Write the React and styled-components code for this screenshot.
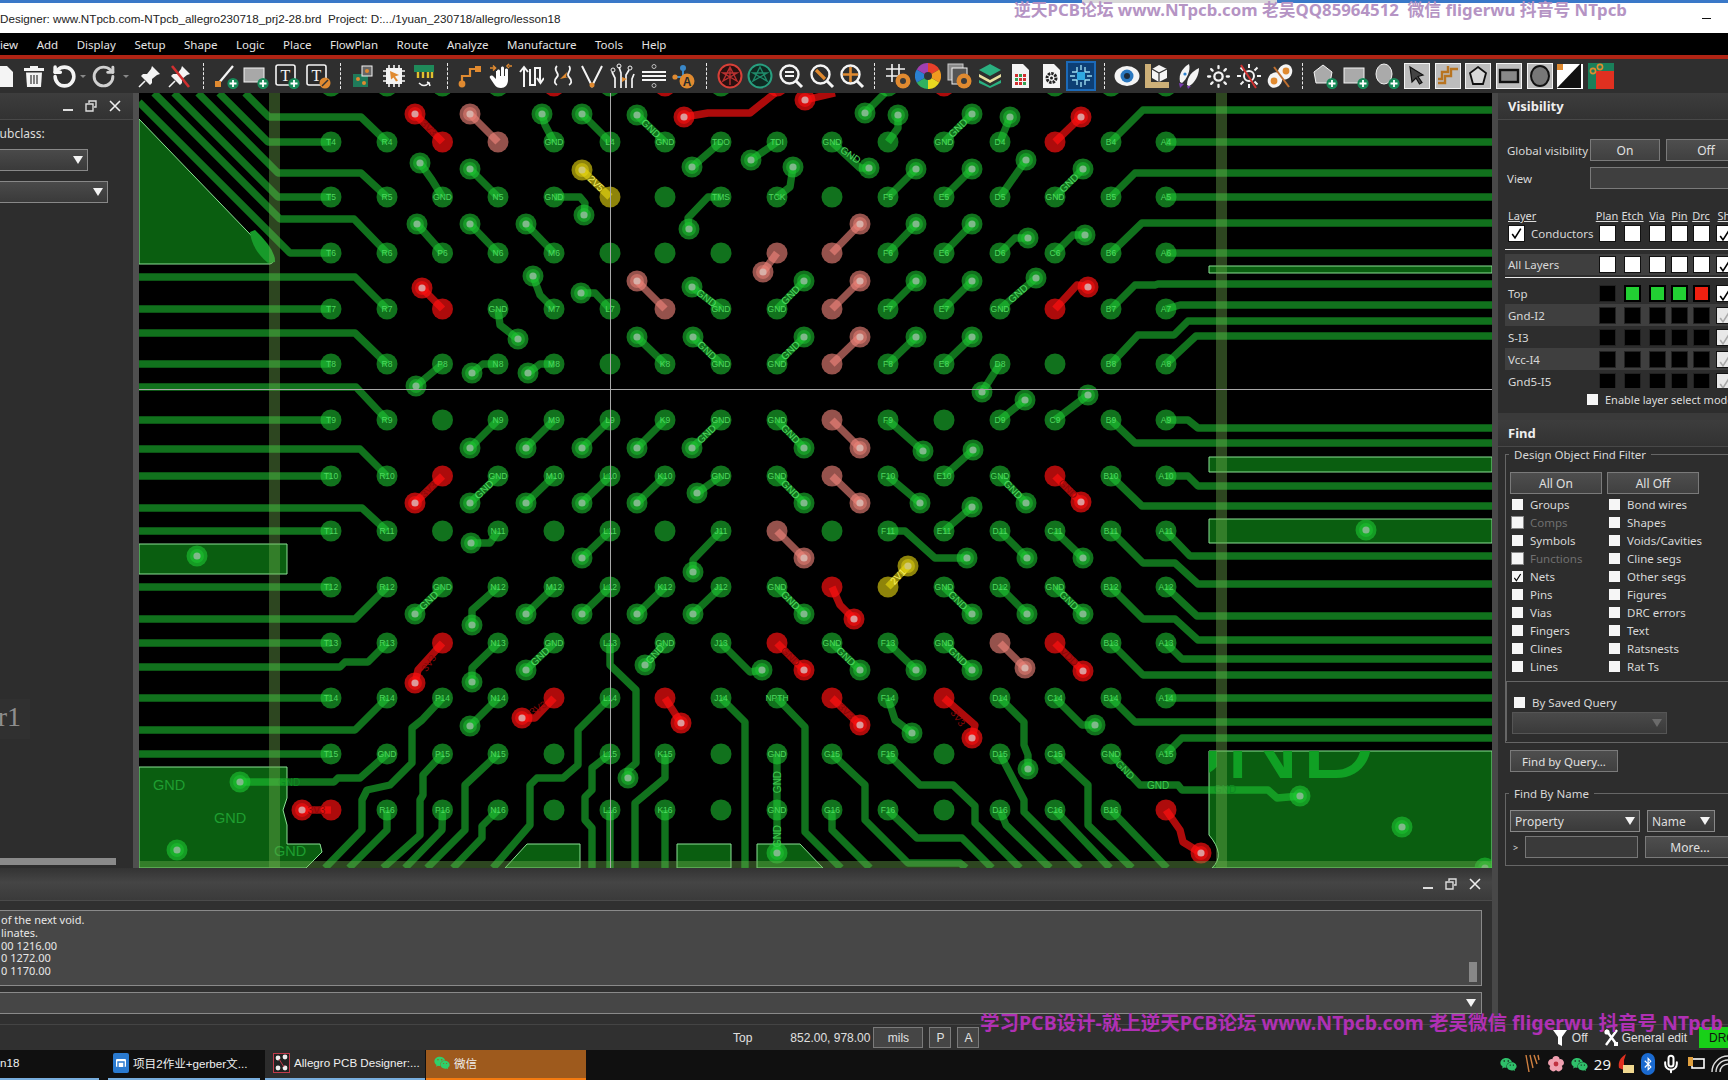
import React from "react";
import styled, { createGlobalStyle } from "styled-components";
import { RotateCcw, RotateCw, Sun, Mic } from "lucide-react";
import { FaWeixin, FaBluetoothB } from "react-icons/fa";

const UI = `"Noto Sans", "Noto Sans CJK SC", sans-serif`;
const NARROW = `"Liberation Sans", "Noto Sans CJK SC", sans-serif`;

const Global = createGlobalStyle`
  html, body { margin: 0; padding: 0; background: #000; }
  #root { width: 1728px; height: 1080px; }
  * { box-sizing: border-box; }
`;

/* ---------- board data ---------- */

const cols = "TRPNMLKJHGFEDCBA";
const colX = [331, 387, 442.5, 498, 554, 610, 665, 721, 777, 832, 888, 944, 1000, 1055, 1111, 1166];
const rowY = { 3: 86, 4: 142, 5: 197, 6: 253, 7: 309, 8: 364, 9: 420, 10: 476, 11: 531, 12: 587, 13: 643, 14: 698, 15: 754, 16: 810 };
const pos = (id) => [colX[cols.indexOf(id[0])], rowY[+id.slice(1)]];

const netColor = {
  g: { fill: "#1fd035", core: "#7fb98a", text: "#4fd860", op: 0.55 },
  r: { fill: "#ff1010", core: "#dc9a9a", text: "#8a0808", op: 0.68 },
  p: { fill: "#f0857a", core: "#d8b0a8", text: "#f0857a", op: 0.62 },
  y: { fill: "#ecdc10", core: "#d0c870", text: "#f4ec60", op: 0.6 },
};

const darkPads = "K5 G5 L6 K6 J6 L8 C8 P9 E9 P11 M11 K11 G11 M15 J15 E15 M16 J16 E16".split(" ");
const topPads = [["T3", "g"], ["R3", "g"], ["P3", "g"], ["N3", "g"], ["M3", "r"], ["L3", "g"], ["K3", "r"], ["J3", "g"], ["H3", "r"], ["F3", "g"], ["E3", "r"], ["C3", "g"], ["B3", "g"], ["A3", "g"]];

// id, colour, label (0 = the id), points after the pad, ends in a via, label on the trace
const nets = [
  ["T4", "g", 0, [[268, 142], [219, 93]]],
  ["R4", "g", 0, [[361, 117], [269, 117], [245, 93]]],
  ["P4", "r", "", [[415, 114]], 1, "3V3"],
  ["N4", "p", "", [[470, 114]], 1],
  ["M4", "g", "GND", [[545, 125], [542, 114]], 1],
  ["L4", "g", 0, [[582, 114]], 1],
  ["K4", "g", "GND", [[637, 115]], 1, "GND"],
  ["J4", "g", "TDO", [[692, 167]], 1],
  ["H4", "g", "TDI", [[751, 160]], 1],
  ["G4", "g", "GND", [[860, 168], [869, 168]], 1, "GND"],
  ["F4", "g", "", [[898, 128], [898, 115]], 1],
  ["E4", "g", "GND", [[972, 114]], 1, "GND"],
  ["D4", "g", 0, [[1010, 117]], 1],
  ["C4", "r", "", [[1081, 117]], 1],
  ["B4", "g", 0, [[1143, 110], [1492, 110]]],
  ["A4", "g", 0, [[1492, 142]]],

  ["T5", "g", 0, [[278, 197], [174, 93]]],
  ["R5", "g", 0, [[361, 173], [278, 173], [198, 93]]],
  ["P5", "g", "GND", [[432, 180], [420, 163]], 1],
  ["N5", "g", 0, [[470, 169]], 1],
  ["M5", "g", "GND", [[580, 197], [585, 203], [584, 215]], 1],
  ["L5", "y", "", [[582, 170]], 1, "2V5"],
  ["J5", "g", "TMS", [[708, 197], [688, 218], [689, 229]], 1],
  ["H5", "g", "TCK", [[790, 187], [793, 167]], 1],
  ["F5", "g", 0, [[916, 169]], 1],
  ["E5", "g", 0, [[972, 169]], 1],
  ["D5", "g", 0, [[1026, 160]], 1],
  ["C5", "g", "GND", [[1083, 169]], 1, "GND"],
  ["B5", "g", 0, [[1135, 173], [1492, 173]]],
  ["A5", "g", 0, [[1492, 197]]],

  ["T6", "g", 0, [[290, 253], [139, 102]]],
  ["R6", "g", 0, [[354, 219], [280, 219], [154, 93]]],
  ["P6", "g", 0, [[417, 224]], 1],
  ["N6", "g", 0, [[470, 224]], 1],
  ["M6", "g", 0, [[526, 224]], 1],
  ["H6", "p", "", [[763, 272]], 1],
  ["G6", "p", "", [[860, 224]], 1],
  ["F6", "g", 0, [[916, 224]], 1],
  ["E6", "g", 0, [[972, 224]], 1],
  ["D6", "g", 0, [[1015, 238], [1028, 238]], 1],
  ["C6", "g", 0, [[1073, 235], [1085, 235]], 1],
  ["B6", "g", 0, [[1142, 223], [1492, 223]]],
  ["A6", "g", 0, [[1492, 253]]],

  ["T7", "g", 0, [[139, 309]]],
  ["R7", "g", 0, [[355, 277], [139, 277]]],
  ["P7", "r", "", [[422, 288]], 1],
  ["N7", "g", "GND", [[500, 325], [518, 339]], 1],
  ["M7", "g", 0, [[540, 295], [533, 276]], 1],
  ["L7", "g", 0, [[595, 293], [581, 293]], 1],
  ["K7", "p", "", [[637, 281]], 1],
  ["J7", "g", "GND", [[692, 287]], 1, "GND"],
  ["H7", "g", "GND", [[804, 281]], 1, "GND"],
  ["G7", "p", "", [[860, 281]], 1],
  ["F7", "g", 0, [[916, 281]], 1],
  ["E7", "g", 0, [[972, 281]], 1],
  ["D7", "g", "GND", [[1036, 278]], 1, "GND"],
  ["C7", "r", "", [[1077, 285], [1088, 287]], 1],
  ["B7", "g", 0, [[1135, 285], [1155, 285], [1158, 284], [1492, 284]]],
  ["A7", "g", 0, [[1180, 305], [1492, 305]]],

  ["T8", "g", 0, [[139, 364]]],
  ["R8", "g", 0, [[355, 333], [139, 333]]],
  ["P8", "g", 0, [[416, 386]], 1],
  ["N8", "g", 0, [[483, 364], [472, 373]], 1],
  ["M8", "g", 0, [[540, 364], [528, 373]], 1],
  ["K8", "g", 0, [[637, 337]], 1],
  ["J8", "g", "GND", [[693, 337]], 1, "GND"],
  ["H8", "g", "GND", [[804, 337]], 1, "GND"],
  ["G8", "p", "", [[860, 337]], 1],
  ["F8", "g", 0, [[916, 337]], 1],
  ["E8", "g", 0, [[972, 337]], 1],
  ["D8", "g", 0, [[982, 392]], 1],
  ["B8", "g", 0, [[1138, 335], [1174, 335], [1188, 321], [1492, 321]]],
  ["A8", "g", 0, [[1196, 336], [1492, 336]]],

  ["T9", "g", 0, [[139, 420]]],
  ["R9", "g", 0, [[356, 387], [139, 387]]],
  ["N9", "g", 0, [[470, 448]], 1],
  ["M9", "g", 0, [[526, 448]], 1],
  ["L9", "g", 0, [[582, 448]], 1],
  ["K9", "g", 0, [[637, 448]], 1],
  ["J9", "g", "GND", [[692, 448]], 1, "GND"],
  ["H9", "g", "GND", [[804, 448]], 1, "GND"],
  ["G9", "p", "", [[860, 448]], 1],
  ["F9", "g", 0, [[923, 451]], 1],
  ["D9", "g", 0, [[1025, 400]], 1],
  ["C9", "g", 0, [[1088, 395]], 1],
  ["B9", "g", 0, [[1135, 443], [1492, 443]]],
  ["A9", "g", 0, [[1188, 420], [1198, 428], [1492, 428]]],

  ["T10", "g", 0, [[139, 476]]],
  ["R10", "g", 0, [[360, 449], [139, 449]]],
  ["P10", "r", "", [[415, 503]], 1, "3V3"],
  ["N10", "g", "GND", [[470, 503]], 1, "GND"],
  ["M10", "g", 0, [[526, 503]], 1],
  ["L10", "g", 0, [[582, 503]], 1],
  ["K10", "g", 0, [[637, 503]], 1],
  ["J10", "g", "GND", [[697, 493]], 1],
  ["H10", "g", "GND", [[804, 503]], 1, "GND"],
  ["G10", "p", "", [[860, 503]], 1],
  ["F10", "g", 0, [[920, 503]], 1],
  ["E10", "g", 0, [[973, 450]], 1],
  ["D10", "g", "GND", [[1026, 503]], 1, "GND"],
  ["C10", "r", "", [[1081, 502]], 1, "GND"],
  ["B10", "g", 0, [[1142, 506], [1492, 506]]],
  ["A10", "g", 0, [[1188, 476], [1198, 486], [1492, 486]]],

  ["T11", "g", 0, [[139, 531]]],
  ["R11", "g", 0, [[362, 508], [139, 508]]],
  ["N11", "g", 0, [[490, 543], [471, 543]], 1],
  ["L11", "g", 0, [[582, 558]], 1],
  ["J11", "g", 0, [[693, 560], [693, 572]], 1],
  ["H11", "p", "", [[804, 558]], 1],
  ["F11", "g", 0, [[905, 531], [935, 558], [967, 558]], 1],
  ["E11", "g", 0, [[972, 507]], 1],
  ["D11", "g", 0, [[1027, 558]], 1],
  ["C11", "g", 0, [[1083, 558]], 1],
  ["B11", "g", 0, [[1143, 563], [1175, 563], [1198, 584], [1492, 584]]],
  ["A11", "g", 0, [[1190, 556], [1492, 556]]],

  ["T12", "g", 0, [[139, 587]]],
  ["R12", "g", 0, [[355, 619], [139, 619]]],
  ["P12", "g", "GND", [[415, 614]], 1, "GND"],
  ["N12", "g", 0, [[472, 610], [472, 625]], 1],
  ["M12", "g", 0, [[526, 614]], 1],
  ["L12", "g", 0, [[582, 614]], 1],
  ["K12", "g", 0, [[637, 614]], 1],
  ["J12", "g", 0, [[693, 614]], 1],
  ["H12", "g", "GND", [[804, 614]], 1, "GND"],
  ["G12", "r", "", [[840, 605], [854, 619]], 1],
  ["F12", "y", "", [[908, 566]], 1, "2V1"],
  ["E12", "g", "GND", [[972, 614]], 1, "GND"],
  ["D12", "g", 0, [[1027, 614]], 1],
  ["C12", "g", "GND", [[1083, 614]], 1, "GND"],
  ["B12", "g", 0, [[1143, 619], [1175, 619], [1198, 640], [1492, 640]]],
  ["A12", "g", 0, [[1197, 616], [1492, 616]]],

  ["T13", "g", 0, [[139, 643]]],
  ["R13", "g", 0, [[368, 662], [345, 662], [340, 667], [139, 667]]],
  ["P13", "r", "", [[418, 670], [415, 683]], 1, "3V3"],
  ["N13", "g", 0, [[472, 668], [472, 682]], 1],
  ["M13", "g", "GND", [[526, 670]], 1, "GND"],
  ["L13", "g", 0, [[610, 665], [636, 690], [636, 763], [628, 770], [628, 778]], 1],
  ["K13", "g", "GND", [[645, 665]], 1, "GND"],
  ["J13", "g", 0, [[750, 672], [762, 670]], 1],
  ["H13", "r", "", [[804, 670]], 1, "GND"],
  ["G13", "g", "GND", [[860, 670]], 1, "GND"],
  ["F13", "g", 0, [[916, 670]], 1],
  ["E13", "g", "GND", [[972, 670]], 1, "GND"],
  ["D13", "p", "", [[1025, 668]], 1],
  ["C13", "r", "", [[1083, 671]], 1, "VDD"],
  ["B13", "g", 0, [[1143, 675], [1492, 675]]],
  ["A13", "g", 0, [[1182, 659], [1492, 659]]],

  ["T14", "g", 0, [[139, 698]]],
  ["R14", "g", 0, [[355, 730], [139, 730]]],
  ["P14", "g", 0, [[422, 720], [412, 728], [412, 763], [390, 785], [367, 790], [362, 800], [362, 830], [325, 868]]],
  ["N14", "g", 0, [[470, 726]], 1],
  ["M14", "r", "", [[535, 718], [522, 718]], 1, "3V3"],
  ["L14", "g", 0, [[578, 730], [578, 765], [563, 778], [537, 778], [530, 785], [530, 825], [493, 868]]],
  ["K14", "r", "", [[681, 723]], 1],
  ["J14", "g", 0, [[745, 722], [745, 868]]],
  ["H14", "g", "NPTH", [[805, 727], [805, 832], [841, 868]]],
  ["G14", "r", "", [[860, 725]], 1, "3V3"],
  ["F14", "g", 0, [[895, 720], [912, 733]], 1],
  ["E14", "r", "", [[975, 725], [972, 738]], 1, "3V3"],
  ["D14", "g", 0, [[1024, 722], [1024, 745], [1028, 755], [1028, 769]], 1],
  ["C14", "g", 0, [[1082, 725], [1095, 725]], 1],
  ["B14", "g", 0, [[1135, 722], [1492, 722]]],
  ["A14", "g", 0, [[1492, 698]]],

  ["T15", "g", 0, [[139, 754]]],
  ["R15", "g", "GND", [[360, 778], [338, 778], [334, 782], [240, 782]], 1],
  ["P15", "g", 0, [[423, 775], [423, 795], [420, 800], [420, 835], [383, 868]]],
  ["N15", "g", 0, [[465, 785], [465, 830], [427, 868]]],
  ["L15", "g", 0, [[592, 768], [592, 790], [585, 797], [585, 820], [592, 828], [592, 868]]],
  ["K15", "g", 0, [[665, 778], [635, 803], [635, 868]]],
  ["H15", "g", "GND", [[777, 853]], 1],
  ["G15", "g", 0, [[865, 785], [865, 820], [908, 863], [960, 863], [966, 868]]],
  ["F15", "g", 0, [[920, 785], [953, 785], [975, 806], [975, 823], [1020, 868]]],
  ["D15", "g", 0, [[1024, 800], [1024, 812], [1080, 868]]],
  ["C15", "g", 0, [[1088, 785], [1088, 825], [1132, 868]]],
  ["B15", "g", "GND", [[1140, 785], [1178, 785], [1182, 790], [1268, 790], [1277, 798], [1300, 796]], 1],
  ["A15", "g", 0, [[1182, 738], [1492, 738]]],

  ["T16", "r", "", [[302, 810]], 1, "3V3"],
  ["R16", "g", 0, [[387, 830], [349, 868]]],
  ["P16", "g", 0, [[442, 830], [405, 868]]],
  ["N16", "g", 0, [[482, 826], [482, 838], [453, 868]]],
  ["L16", "g", 0, [[610, 868]]],
  ["K16", "g", 0, [[665, 868]]],
  ["G16", "g", 0, [[832, 830], [870, 868]]],
  ["F16", "g", 0, [[917, 838], [962, 838], [992, 868]]],
  ["D16", "g", 0, [[1006, 825], [1050, 868]]],
  ["C16", "g", 0, [[1110, 868]]],
  ["B16", "g", 0, [[1167, 868]]],
  ["A16", "r", "", [[1180, 830], [1183, 842], [1201, 853]], 1],
  ["H16", "g", "GND", []],
];

// traces that start from a via with no pad of their own
const stubs = [
  ["g", [[865, 113], [885, 93]]],
  ["r", [[684, 117], [708, 113], [750, 113], [775, 93]]],
  ["r", [[805, 100], [835, 93]]],
];
const looseVias = [[197, 556], [177, 850], [1366, 530], [1402, 827], [1485, 868]];

const pours = [
  "M139 119 L272 257 Q276 262 270 264 L139 264Z",
  "M1209 266H1492V273H1209Z",
  "M1209 457H1492V472H1209Z",
  "M1209 519H1492V543H1209Z",
  "M139 544H287V574H139Z",
  "M139 767H287V798L283 810L287 825V844H320L322 852L306 868H139Z",
  "M1209 751H1492V868H1212Q1226 855 1209 835Z",
  "M505 868L527 844H580V868Z",
  "M677 868V844H731V868Z",
  "M757 868V844H800L823 868Z",
];

const pourMarks = [[169, 785], [230, 818], [290, 851]];

// net names printed along a trace, away from its middle
const freeLabels = [
  [1158, 785, 0],
  [1125, 770, 45],
  [777, 782, -90],
  [777, 836, -90],
];

function TraceLabel({ from, to, text, color }) {
  const mx = (from[0] + to[0]) / 2;
  const my = (from[1] + to[1]) / 2;
  let deg = (Math.atan2(to[1] - from[1], to[0] - from[0]) * 180) / Math.PI;
  if (deg > 90) deg -= 180;
  if (deg < -90) deg += 180;
  return (
    <text x={mx} y={my} fontSize="10" fill={color} textAnchor="middle" dominantBaseline="central" transform={`rotate(${deg} ${mx} ${my})`}>
      {text}
    </text>
  );
}

function Via({ at, net }) {
  const c = netColor[net];
  return (
    <g>
      <circle cx={at[0]} cy={at[1]} r="10.5" fill={c.fill} opacity={c.op} />
      <circle cx={at[0]} cy={at[1]} r="7" fill={c.fill} opacity={c.op * 0.8} />
      <circle cx={at[0]} cy={at[1]} r="3.6" fill={c.core} />
    </g>
  );
}

function Board() {
  return (
    <BoardSvg viewBox="139 93 1353 775">
      <defs>
        <clipPath id="rightPour">
          <path d="M1209 751H1492V868H1209Z" />
        </clipPath>
      </defs>
      {pours.map((d) => (
        <path key={d} d={d} fill="#0a5e10" stroke="#8ae294" strokeWidth="1" />
      ))}
      <path d="M255 230Q276 250 275 262L268 263Q252 250 250 232Z" fill="#179a2a" />
      <g clipPath="url(#rightPour)">
        <text x="1143" y="778" fontSize="105" fill="#10a024">GND</text>
      </g>
      {pourMarks.map(([x, y]) => (
        <text key={x} x={x} y={y} fontSize="14.5" fill="#1f9e30" textAnchor="middle" dominantBaseline="central">GND</text>
      ))}

      {darkPads.map((id) => {
        const [x, y] = pos(id);
        return <circle key={id} cx={x} cy={y} r="10.5" fill="#1fd035" opacity="0.55" />;
      })}
      {topPads.map(([id, n]) => {
        const [x, y] = pos(id);
        return <circle key={id} cx={x} cy={y} r="10.5" fill={netColor[n].fill} opacity={netColor[n].op} />;
      })}

      {nets.map(([id, n, , pts]) => {
        const [x, y] = pos(id);
        const c = netColor[n];
        return (
          <g key={id}>
            <circle cx={x} cy={y} r="10.5" fill={c.fill} opacity={c.op} />
            {pts.length > 0 && (
              <polyline
                points={[[x, y], ...pts].map((p) => p.join(",")).join(" ")}
                fill="none"
                stroke={c.fill}
                strokeWidth="7.4"
                strokeLinejoin="round"
                strokeLinecap="butt"
                opacity={c.op}
              />
            )}
          </g>
        );
      })}
      {stubs.map(([n, pts]) => (
        <polyline
          key={pts[0].join()}
          points={pts.map((p) => p.join(",")).join(" ")}
          fill="none"
          stroke={netColor[n].fill}
          strokeWidth="7.4"
          strokeLinejoin="round"
          opacity={netColor[n].op}
        />
      ))}

      {nets.filter((e) => e[4]).map(([id, n, , pts]) => (
        <Via key={id} at={pts[pts.length - 1]} net={n} />
      ))}
      {stubs.map(([n, pts]) => (
        <Via key={pts[0].join()} at={pts[0]} net={n} />
      ))}
      {looseVias.map((at) => (
        <Via key={at.join()} at={at} net="g" />
      ))}

      {nets.map(([id, n, label]) => {
        const text = label === 0 ? id : label;
        if (!text) return null;
        const [x, y] = pos(id);
        return (
          <text key={id} x={x} y={y} fontSize="8.5" fill={netColor[n].text} textAnchor="middle" dominantBaseline="central">
            {text}
          </text>
        );
      })}
      {nets.filter((e) => e[5]).map(([id, n, , pts, , tl]) => (
        <TraceLabel key={id} from={pos(id)} to={pts[pts.length - 1]} text={tl} color={netColor[n].text} />
      ))}
      {freeLabels.map(([x, y, deg]) => (
        <text key={`${x}-${y}`} x={x} y={y} fontSize="10" fill="#3fc850" textAnchor="middle" dominantBaseline="central" transform={`rotate(${deg} ${x} ${y})`}>
          GND
        </text>
      ))}
      <text x="289" y="782" fontSize="10" fill="#0f8a22" textAnchor="middle" dominantBaseline="central">GND</text>
      <text x="1225" y="789" fontSize="10" fill="#0f8a22" textAnchor="middle" dominantBaseline="central">GND</text>

      <rect x="269" y="93" width="11" height="775" fill="#70b050" opacity="0.4" />
      <rect x="1216" y="93" width="11" height="775" fill="#70b050" opacity="0.4" />
      <rect x="139" y="861" width="1353" height="7" fill="#70b050" opacity="0.4" />
      <line x1="139" y1="389.5" x2="1492" y2="389.5" stroke="#a8a8a8" strokeWidth="1" />
      <line x1="610.5" y1="93" x2="610.5" y2="868" stroke="#a8a8a8" strokeWidth="1" />
    </BoardSvg>
  );
}

/* ---------- toolbar icons ---------- */

const W = "#f4f4f4";
const O = "#e08a30";

const Plus = () => (
  <g>
    <circle cx="20" cy="20.5" r="5.6" fill="#178a58" />
    <path d="M20 17v7M16.5 20.5h7" stroke="#fff" strokeWidth="1.8" />
  </g>
);

const EyeBadge = () => (
  <g>
    <circle cx="18" cy="18" r="7.5" fill={O} />
    <circle cx="18" cy="18" r="3" fill="#3a3a3a" />
  </g>
);

const PinShape = () => (
  <>
    <path d="M15 3l8 8-3 1-5 4 0 4-2 2-9-9 2-2 4 0 4-5z" fill={W} />
    <path d="M8 18l-6 6" stroke={W} strokeWidth="1.6" />
  </>
);

const ZoomRing = ({ children }) => (
  <>
    <circle cx="11.5" cy="11.5" r="9" fill="none" stroke={W} strokeWidth="2.4" />
    <path d="M18 18l6 6" stroke={W} strokeWidth="3" />
    {children}
  </>
);

const wheel = ["#e8402a", "#f09a20", "#e8d820", "#30b060", "#2a80d0", "#a040b0"];

const Art = {
  doc: <path d="M2 3h15l6 6v15H2z" fill={W} />,
  trash: (
    <>
      <path d="M9 3h8v2h6v3H3V5h6z" fill={W} />
      <path d="M5 9.5h16L20 24H6z" fill={W} />
      <path d="M10 12v9M13 12v9M16 12v9" stroke="#444" strokeWidth="1.3" />
    </>
  ),
  pin: <PinShape />,
  pinOff: (
    <>
      <PinShape />
      <path d="M5 3l17 21" stroke="#d03030" strokeWidth="2.6" />
    </>
  ),
  addLine: (
    <>
      <path d="M5 21L20 3" stroke={W} strokeWidth="2.2" />
      <rect x="2" y="18" width="6" height="6" fill={O} />
      <Plus />
    </>
  ),
  addRect: (
    <>
      <rect x="1" y="5" width="20" height="14" fill="#a8a8a8" stroke={W} />
      <Plus />
    </>
  ),
  textAdd: (
    <>
      <rect x="2" y="2" width="19" height="20" rx="2" fill="#2a2a2a" stroke={W} strokeWidth="1.6" />
      <text x="11.5" y="17.5" fontSize="16" fontFamily="Liberation Serif, serif" fill={W} textAnchor="middle">T</text>
      <Plus />
    </>
  ),
  textEdit: (
    <>
      <rect x="2" y="2" width="19" height="20" rx="2" fill="#2a2a2a" stroke={W} strokeWidth="1.6" />
      <text x="11.5" y="17.5" fontSize="16" fontFamily="Liberation Serif, serif" fill={W} textAnchor="middle">T</text>
      <circle cx="20" cy="20" r="5.5" fill={O} />
      <path d="M17 23l6-6" stroke="#333" strokeWidth="1.5" />
    </>
  ),
  comp: (
    <>
      <rect x="3" y="11" width="15" height="13" fill="#1f7a5a" />
      <rect x="12" y="3" width="10" height="10" fill="#666" stroke={W} />
      <circle cx="8" cy="16" r="2" fill={O} />
      <circle cx="14" cy="20" r="2" fill={O} />
      <circle cx="17" cy="8" r="2" fill={O} />
    </>
  ),
  chip: (
    <>
      <path d="M8 2v22M13 2v22M18 2v22M2 8h22M2 13h22M2 18h22" stroke={W} strokeWidth="1.6" />
      <rect x="5" y="5" width="16" height="16" fill={W} />
      <path d="M9 8l9 4-4 1.5 3 4-2 1-2.5-4-2.5 2z" fill={O} />
    </>
  ),
  comb: (
    <>
      <rect x="3" y="2" width="20" height="7" fill="#1f8a5a" />
      <path d="M7 9v6M12 9v6M17 9v6M21 9v6" stroke="#e0c030" strokeWidth="2.4" />
      <path d="M8 20q5 5 10 0l-2-1M18 20l1 3" stroke={W} strokeWidth="1.6" fill="none" />
    </>
  ),
  route: (
    <>
      <path d="M5 21v-8l8 0 0-7h7" stroke={O} strokeWidth="2.2" fill="none" />
      <circle cx="5" cy="21" r="3.4" fill={O} />
      <rect x="18" y="3" width="6" height="6" fill={O} />
    </>
  ),
  hand: (
    <>
      <path d="M9 8c0-2 3-2 3 0v5h1V5c0-2 3-2 3 0v8h1V7c0-2 3-2 3 0v10c0 5-3 8-7 8-3 0-5-1-7-4l-4-6c-1-2 1-3 3-2l3 3V8z" fill="#fff" />
      <path d="M2 5h5M5 2.5L7.5 5 5 7.5M24 3h-3M21 1l-2 2 2 2" stroke={O} strokeWidth="1.6" fill="none" />
    </>
  ),
  arrows: <path d="M6 24V5M2 9l4-5 4 5M12 6v16h5V5h5v14M19 15l3.5 5 3.5-5" stroke={W} strokeWidth="2" fill="none" />,
  squiggle: (
    <>
      <path d="M8 3c-5 5 4 7 0 11s-2 7 0 8" stroke={W} strokeWidth="1.8" fill="none" />
      <path d="M20 3c4 5-4 7 0 11s2 7 0 8" stroke={W} strokeWidth="1.8" fill="none" />
      <path d="M11 16l7-7-1 5 3 0z" fill={O} />
    </>
  ),
  vee: (
    <>
      <path d="M3 3l10 20L23 3" stroke={W} strokeWidth="2" fill="none" />
      <circle cx="13" cy="22" r="2.5" fill={O} />
    </>
  ),
  fan: (
    <>
      <path d="M5 25V15l-3-6M11 25V10l-2-6M16 25V12l3-5M22 25V16l2-5" stroke={W} strokeWidth="1.7" fill="none" />
      <circle cx="3" cy="7" r="2" fill="none" stroke={W} />
      <circle cx="9" cy="3" r="2" fill="none" stroke={W} />
      <circle cx="20" cy="5" r="2" fill="none" stroke={W} />
      <path d="M12 14l5 2-5 3z" fill={O} />
    </>
  ),
  lines: (
    <>
      <path d="M1 9h24M1 13h24M1 17h24" stroke={W} strokeWidth="2.2" />
      <circle cx="13" cy="3.5" r="2" fill="none" stroke="#bbb" />
      <circle cx="13" cy="22.5" r="2" fill="none" stroke="#bbb" />
    </>
  ),
  netA: (
    <>
      <path d="M3 14h9V5" stroke="#3a88c8" strokeWidth="2" fill="none" />
      <circle cx="12" cy="5" r="3" fill="#3a88c8" />
      <circle cx="4" cy="14" r="2.6" fill={O} />
      <circle cx="16" cy="18" r="7.5" fill={O} />
      <text x="16" y="22.5" fontSize="12" fontWeight="700" fontFamily="Liberation Sans, sans-serif" fill="#2a2a2a" textAnchor="middle">A</text>
    </>
  ),
  ringRed: (
    <>
      <circle cx="13" cy="13" r="11.5" fill="#2a1010" stroke="#d84038" strokeWidth="2" />
      <path d="M6 18L13 4l7 14-14-8h14zM13 4v18" stroke="#b83030" strokeWidth="1.4" fill="none" />
    </>
  ),
  ringGreen: (
    <>
      <circle cx="13" cy="13" r="11.5" fill="#0f2a22" stroke="#28a080" strokeWidth="2" />
      <path d="M6 18L13 4l7 14-14-8h14z" stroke="#1f8a6a" strokeWidth="1.4" fill="none" />
    </>
  ),
  zoomLines: <ZoomRing><path d="M7 9h9M7 13h9" stroke={W} strokeWidth="2" /></ZoomRing>,
  zoomArrow: <ZoomRing><path d="M7 7l9 9" stroke={O} strokeWidth="3.2" /></ZoomRing>,
  zoomCross: <ZoomRing><path d="M11.5 4v15M4 11.5h15" stroke={O} strokeWidth="2.6" /></ZoomRing>,
  grid: (
    <>
      <path d="M7 1v18M14 1v12M1 6h19M1 13h12" stroke={W} strokeWidth="1.6" />
      <EyeBadge />
    </>
  ),
  wheel: (
    <>
      {wheel.map((c, i) => (
        <path key={c} d="M13 13L13 0A13 13 0 0 1 24.3 6.5Z" fill={c} transform={`rotate(${i * 60} 13 13)`} />
      ))}
      <circle cx="13" cy="13" r="4" fill="#333" />
    </>
  ),
  copy: (
    <>
      <rect x="2" y="1" width="15" height="16" fill="#888" stroke="#ccc" />
      <rect x="6" y="5" width="15" height="16" fill="#555" stroke={W} />
      <EyeBadge />
    </>
  ),
  stack: (
    <>
      <path d="M13 1l11 6-11 6L2 7z" fill="#2ab080" />
      <path d="M2 11l11 6 11-6v3l-11 6L2 14z" fill="#e8e0a0" />
      <path d="M2 17l11 6 11-6v3l-11 5-11-5z" fill="#2ab080" />
    </>
  ),
  docGrid: (
    <>
      <path d="M5 1h11l6 6v18H5z" fill={W} />
      {[0, 1, 2].map((r) => [0, 1, 2].map((c) => (
        <rect key={`${r}${c}`} x={8 + c * 4} y={11 + r * 4} width="3" height="3" fill={["#d03030", "#30a050", "#d03030"][(r + c) % 3]} />
      )))}
    </>
  ),
  docGear: (
    <>
      <path d="M5 1h11l6 6v18H5z" fill={W} />
      <circle cx="13.5" cy="15" r="4.5" fill="none" stroke="#222" strokeWidth="3" strokeDasharray="2.4 1" />
      <circle cx="13.5" cy="15" r="1.5" fill="#222" />
    </>
  ),
  pcbFocus: (
    <>
      <rect x="9" y="9" width="8" height="8" fill="#30a8e0" />
      <path d="M13 2v5M9 4v5M17 4v5M13 19v5M9 17v5M17 17v5M2 13h5M4 9h5M4 17h5M19 13h5M17 9h5M17 17h5" stroke="#9cdcf0" strokeWidth="1.4" />
    </>
  ),
  eye: (
    <>
      <ellipse cx="13" cy="13" rx="12.5" ry="10" fill={W} />
      <circle cx="13" cy="13" r="6.5" fill="#2a78c0" />
      <circle cx="13" cy="13" r="3" fill="#1c2a3a" />
    </>
  ),
  ruler: (
    <>
      <path d="M1 1h6v18h18v6H1z" fill="#cdb078" />
      <path d="M15 2l8 4v9l-8 4-7-4V6z" fill={W} />
      <path d="M15 10v9M8 6l7 4 8-4" stroke="#333" strokeWidth="1.2" fill="none" />
    </>
  ),
  brush: (
    <>
      <path d="M5 19C3 10 9 4 14 1c2 6-2 15-7 19z" fill={W} />
      <path d="M12 22c0-9 6-14 12-17 0 7-4 15-10 18z" fill={W} />
      <circle cx="10" cy="11" r="1.6" fill="#2a80d0" />
      <path d="M4 20l5 1-4 4z" fill="#7a3ab0" />
      <path d="M12 23l4 0-3 3z" fill="#7a3ab0" />
    </>
  ),
  swap: (
    <>
      <ellipse cx="8" cy="17" rx="7" ry="8" fill={W} transform="rotate(30 8 17)" />
      <ellipse cx="18" cy="9" rx="7" ry="8" fill={W} transform="rotate(30 18 9)" />
      <circle cx="7" cy="18" r="3.4" fill={O} />
      <circle cx="19" cy="8" r="3.4" fill={O} />
      <path d="M7 4l15 20" stroke="#c07030" strokeWidth="2" />
    </>
  ),
  shapeAdd: (
    <>
      <path d="M11 2l9 7-2 11H4L2 9z" fill="#aaa" stroke={W} />
      <Plus />
    </>
  ),
  rectAdd: (
    <>
      <rect x="1" y="5" width="20" height="15" fill="#aaa" stroke={W} />
      <Plus />
    </>
  ),
  circleAdd: (
    <>
      <ellipse cx="10" cy="11" rx="8" ry="10" fill="#aaa" stroke={W} />
      <Plus />
    </>
  ),
};

const Boxed = {
  cursor: <path d="M6 4l13 8-5 1.5 4 6-2.5 1.5-3.5-6L8 19z" fill="#444" stroke="#111" strokeWidth="1.2" />,
  step: <path d="M3 20h7v-7h6V6h7M3 16h4V9h6V3" stroke="#b87420" strokeWidth="2.4" fill="none" />,
  penta: <path d="M13 4l8 6-3 11H8L5 10z" fill="#d8d8d8" stroke="#111" strokeWidth="1.8" />,
  rect: <rect x="4" y="7" width="18" height="12" fill="#888" stroke="#111" strokeWidth="2.4" />,
  circle: <ellipse cx="13" cy="13" rx="9" ry="10" fill="#777" stroke="#111" strokeWidth="2" />,
};

function Art26({ name }) {
  return <svg width="26" height="26" viewBox="0 0 26 26">{Art[name]}</svg>;
}

function Box26({ name }) {
  return (
    <svg width="26" height="26" viewBox="0 0 26 26">
      <rect x="0.5" y="0.5" width="25" height="25" fill="#bdbdbd" stroke={W} />
      {Boxed[name]}
    </svg>
  );
}

const toolGroups = [
  [["a", "doc"], ["a", "trash"], ["undo"], ["caret", 8], ["redo"], ["caret", 16], ["a", "pin"], ["a", "pinOff"]],
  [["a", "addLine"], ["a", "addRect"], ["a", "textAdd"], ["a", "textEdit"]],
  [["a", "comp"], ["a", "chip"], ["a", "comb"]],
  [["a", "route"], ["a", "hand"], ["a", "arrows"], ["a", "squiggle"], ["a", "vee"], ["a", "fan"], ["a", "lines"], ["a", "netA"]],
  [["a", "ringRed"], ["a", "ringGreen"], ["a", "zoomLines"], ["a", "zoomArrow"], ["a", "zoomCross"]],
  [["a", "grid"], ["a", "wheel"], ["a", "copy"], ["a", "stack"], ["a", "docGrid"], ["a", "docGear"], ["focus"]],
  [["a", "eye"], ["a", "ruler"], ["a", "brush"], ["sun"], ["sunOff"], ["a", "swap"]],
  [["a", "shapeAdd"], ["a", "rectAdd"], ["a", "circleAdd"], ["b", "cursor"], ["b", "step"], ["b", "penta"], ["b", "rect"], ["b", "circle"], ["half"], ["pcb"]],
];

function ToolIcon({ t }) {
  const [kind, arg] = t;
  if (kind === "a") return <Tool><Art26 name={arg} /></Tool>;
  if (kind === "b") return <Tool><Box26 name={arg} /></Tool>;
  if (kind === "caret") return <CaretSlot $w={arg}><SmallCaret /></CaretSlot>;
  if (kind === "undo") return <Tool><RotateCcw size={25} strokeWidth={3.4} color="#f4f4f4" /></Tool>;
  if (kind === "redo") return <Tool><RotateCw size={25} strokeWidth={2.8} color="#d0d0d0" /></Tool>;
  if (kind === "focus") return <Tool $active><Art26 name="pcbFocus" /></Tool>;
  if (kind === "sun") return <Tool><Sun size={25} strokeWidth={2.2} color="#f4f4f4" /></Tool>;
  if (kind === "sunOff")
    return (
      <Tool>
        <svg width="26" height="26" viewBox="0 0 26 26">
          <circle cx="13" cy="13" r="5" fill="none" stroke={W} strokeWidth="2" />
          <path d="M13 1v4M13 21v4M1 13h4M21 13h4M4.5 4.5l3 3M18.5 18.5l3 3M21.5 4.5l-3 3M7.5 18.5l-3 3" stroke={W} strokeWidth="2" />
          <path d="M5 2l15 23" stroke="#d03030" strokeWidth="2" />
        </svg>
      </Tool>
    );
  if (kind === "half")
    return (
      <Tool>
        <svg width="26" height="26" viewBox="0 0 26 26">
          <rect x="0" y="1" width="26" height="25" fill="#fff" />
          <path d="M26 1L2 26V1z" fill="#111" transform="rotate(180 13 13)" />
          <path d="M0 1h6v6H0z" fill={O} />
        </svg>
      </Tool>
    );
  return (
    <Tool>
      <svg width="26" height="26" viewBox="0 0 26 26">
        <rect width="26" height="26" fill="#1a7f5a" />
        <rect x="8" y="8" width="18" height="18" fill="#e03020" />
        <circle cx="5" cy="8" r="2.6" fill="none" stroke={O} strokeWidth="1.6" />
        <circle cx="12" cy="4" r="2.6" fill="none" stroke={O} strokeWidth="1.6" />
      </svg>
    </Tool>
  );
}

/* ---------- small widgets ---------- */

const CheckMark = ({ color = "#000" }) => (
  <svg viewBox="0 0 14 14" width="100%" height="100%">
    <path d="M3 7.5l2.6 3.6L11 2.5" fill="none" stroke={color} strokeWidth="1.5" />
  </svg>
);

function Restore() {
  return (
    <svg width="12" height="12" viewBox="0 0 12 12">
      <path d="M4 3V1h7v6H9M1 4h7v7H1z" fill="none" stroke="#ddd" strokeWidth="1.4" />
    </svg>
  );
}

function Close() {
  return (
    <svg width="12" height="12" viewBox="0 0 12 12">
      <path d="M1 1l10 10M11 1L1 11" stroke="#eee" strokeWidth="1.6" />
    </svg>
  );
}

function WindowIcons() {
  return (
    <WinIcons>
      <MinBar />
      <Restore />
      <Close />
    </WinIcons>
  );
}

const blackRow = ["#000", "#000", "#000", "#000", "#000"];
const layerRows = [
  ["Top", ["#000", "#22d033", "#22d033", "#22d033", "#f02010"], true, false],
  ["Gnd-I2", blackRow, false, true],
  ["S-I3", blackRow, false, false],
  ["Vcc-I4", blackRow, false, true],
  ["Gnd5-I5", blackRow, false, false],
];

const filtersLeft = [["Groups"], ["Comps", 1], ["Symbols"], ["Functions", 1], ["Nets", 0, 1], ["Pins"], ["Vias"], ["Fingers"], ["Clines"], ["Lines"]];
const filtersRight = ["Bond wires", "Shapes", "Voids/Cavities", "Cline segs", "Other segs", "Figures", "DRC errors", "Text", "Ratsnests", "Rat Ts"];

const menuItems = ["View", "Add", "Display", "Setup", "Shape", "Logic", "Place", "FlowPlan", "Route", "Analyze", "Manufacture", "Tools", "Help"];

function VisibilityPanel() {
  return (
    <>
      <PanelHead>Visibility</PanelHead>
      <GlobalRow>
        <RowLabel>Global visibility</RowLabel>
        <PlainButton $w={70}>On</PlainButton>
        <PlainButton $w={80} $left={6}>Off</PlainButton>
      </GlobalRow>
      <ViewRow>
        <RowLabel>View</RowLabel>
        <ViewField />
      </ViewRow>
      <LayerHeadRow>
        <LayerHeadName>Layer</LayerHeadName>
        {["Plan", "Etch", "Via", "Pin", "Drc", "Sh"].map((h) => (
          <LayerHead key={h}>{h}</LayerHead>
        ))}
      </LayerHeadRow>
      <LayerRow>
        <ConductorName>
          <BigCheck><CheckMark /></BigCheck>
          Conductors
        </ConductorName>
        {[0, 1, 2, 3, 4].map((i) => (
          <Cell key={i}><WhiteBox /></Cell>
        ))}
        <Cell><WhiteBox><CheckMark /></WhiteBox></Cell>
      </LayerRow>
      <Rule $top={5} $bottom={4} />
      <LayerRow $shade>
        <LayerName>All Layers</LayerName>
        {[0, 1, 2, 3, 4].map((i) => (
          <Cell key={i}><WhiteBox /></Cell>
        ))}
        <Cell><WhiteBox><CheckMark /></WhiteBox></Cell>
      </LayerRow>
      <Rule $top={2} $bottom={0} />
      <LayerList>
        {layerRows.map(([name, colors, on, shade]) => (
          <LayerRow key={name} $shade={shade} $tall>
            <LayerName>{name}</LayerName>
            {colors.map((c, i) => (
              <Cell key={i}><Swatch $c={c} /></Cell>
            ))}
            <Cell>
              <WhiteBox $dim={!on}><CheckMark color={on ? "#000" : "#aaa"} /></WhiteBox>
            </Cell>
          </LayerRow>
        ))}
      </LayerList>
      <EnableRow>
        <SmallBox />
        Enable layer select mode
      </EnableRow>
    </>
  );
}

function FindPanel() {
  return (
    <>
      <PanelHead>Find</PanelHead>
      <FilterSet>
        <Legend>Design Object Find Filter</Legend>
        <ButtonRow>
          <PlainButton $w={92}>All On</PlainButton>
          <PlainButton $w={92}>All Off</PlainButton>
        </ButtonRow>
        <FilterGrid>
          <div>
            {filtersLeft.map(([name, off, on]) => (
              <FilterItem key={name} $off={off}>
                <SmallBox $off={off} $on={on}>{on ? <CheckMark /> : null}</SmallBox>
                {name}
              </FilterItem>
            ))}
          </div>
          <div>
            {filtersRight.map((name) => (
              <FilterItem key={name}>
                <SmallBox />
                {name}
              </FilterItem>
            ))}
          </div>
        </FilterGrid>
        <SavedBox>
          <SavedRow>
            <SmallBox />
            By Saved Query
          </SavedRow>
          <Combo $w={155} $dim />
        </SavedBox>
      </FilterSet>
      <QueryButton>Find by Query...</QueryButton>
      <NameSet>
        <Legend>Find By Name</Legend>
        <NameRow $top={9}>
          <Combo $w={130}>Property</Combo>
          <Combo $w={68}>Name</Combo>
        </NameRow>
        <NameRow $top={4}>
          <Prompt>&gt;</Prompt>
          <NameInput />
          <PlainButton $w={90}>More...</PlainButton>
        </NameRow>
      </NameSet>
    </>
  );
}

export default function App() {
  return (
    <Page>
      <Global />
      <TopStrip><StripThumb /></TopStrip>
      <TitleBar>
        Designer: www.NTpcb.com-NTpcb_allegro230718_prj2-28.brd&nbsp; Project: D:.../1yuan_230718/allegro/lesson18
        <TitleMin />
      </TitleBar>
      <TopWatermark>逆天PCB论坛 www.NTpcb.com 老吴QQ85964512&nbsp; 微信 fligerwu 抖音号 NTpcb</TopWatermark>
      <MenuBar>
        {menuItems.map((m) => (
          <MenuItem key={m}>{m}</MenuItem>
        ))}
      </MenuBar>
      <Toolbar>
        {toolGroups.map((group, i) => (
          <React.Fragment key={i}>
            {i > 0 && <ToolSep />}
            {group.map((t, j) => (
              <ToolIcon key={j} t={t} />
            ))}
          </React.Fragment>
        ))}
      </Toolbar>
      <Workspace>
        <MainColumn>
          <BoardRow>
            <LeftPanel>
              <LeftHead><WindowIcons /></LeftHead>
              <SubclassLabel>Subclass:</SubclassLabel>
              <LeftCombo $w={88} />
              <LeftCombo $w={108} $gap={10} />
              <Ghost>r1</Ghost>
              <LeftScroll />
            </LeftPanel>
            <Board />
          </BoardRow>
          <CommandPanel>
            <CommandHead><WindowIcons /></CommandHead>
            <CommandBox>
              <CommandLine>of the next void.</CommandLine>
              <CommandLine>linates.</CommandLine>
              <CommandLine>00 1216.00</CommandLine>
              <CommandLine>0 1272.00</CommandLine>
              <CommandLine>0 1170.00</CommandLine>
              <CommandThumb />
            </CommandBox>
            <CommandInput><Arrow /></CommandInput>
          </CommandPanel>
        </MainColumn>
        <RightPanel>
          <RightCard><VisibilityPanel /></RightCard>
          <FindCard><FindPanel /></FindCard>
        </RightPanel>
      </Workspace>
      <StatusBar>
        <StatusText $left={733}>Top</StatusText>
        <StatusText $left={38}>852.00, 978.00</StatusText>
        <StatusButton $w={50} $left={3}>mils</StatusButton>
        <StatusButton $w={22} $left={6}>P</StatusButton>
        <StatusButton $w={22} $left={6}>A</StatusButton>
        <StatusGap />
        <svg width="14" height="18" viewBox="0 0 14 18">
          <path d="M0 1h14L9 8v9l-4-2V8z" fill="#fff" />
        </svg>
        <StatusText $left={5}>Off</StatusText>
        <WrenchIcon />
        <StatusText $left={3}>General edit</StatusText>
        <DrcBlock>
          <svg width="14" height="14" viewBox="0 0 14 14">
            <path d="M7 0l7 14H0z" fill="#111" />
            <path d="M7 5v5M7 11v1.5" stroke="#18d018" strokeWidth="1.4" />
          </svg>
          <DrcText>DRC</DrcText>
        </DrcBlock>
      </StatusBar>
      <BottomWatermark>学习PCB设计-就上逆天PCB论坛 www.NTpcb.com 老吴微信 fligerwu 抖音号 NTpcb</BottomWatermark>
      <Taskbar>
        <TaskItem $w={99}>n18</TaskItem>
        <TaskItem $w={152} $left={9}>
          <NoteIcon />
          项目2作业+gerber文...
        </TaskItem>
        <TaskItem $w={160} $left={5} $active>
          <BoardIcon />
          Allegro PCB Designer:...
        </TaskItem>
        <TaskItem $w={160} $left={1} $orange>
          <FaWeixin size={16} color="#2fd06a" />
          微信
        </TaskItem>
        <Tray>
          <FaWeixin size={17} color="#2fc06a" />
          <svg width="18" height="20" viewBox="0 0 18 20">
            <path d="M3 1l3 17M7 1l3 13M11 1l3 9M15 1l1 5" stroke="#d08040" strokeWidth="1.4" />
          </svg>
          <svg width="18" height="18" viewBox="0 0 18 18">
            {[0, 72, 144, 216, 288].map((r) => (
              <circle key={r} cx="9" cy="4.5" r="3.6" fill="#f0a0b0" transform={`rotate(${r} 9 9)`} />
            ))}
            <circle cx="9" cy="9" r="2.4" fill="#c03040" />
          </svg>
          <FaWeixin size={17} color="#2fc06a" />
          <TrayCount>29</TrayCount>
          <svg width="18" height="22" viewBox="0 0 18 22">
            <path d="M9 1C3 5 1 9 2 15l5 2V7z" fill="#e03020" />
            <rect x="6" y="12" width="11" height="8" fill="#f0d890" />
          </svg>
          <BluetoothBadge><FaBluetoothB size={14} color="#fff" /></BluetoothBadge>
          <Mic size={20} color="#fff" strokeWidth={2.4} />
          <svg width="18" height="18" viewBox="0 0 18 18">
            <rect x="5" y="4" width="12" height="9" fill="none" stroke="#fff" strokeWidth="1.6" />
            <rect x="1" y="2" width="5" height="9" fill="#e0a040" />
          </svg>
          <svg width="18" height="18" viewBox="0 0 18 18">
            <path d="M1 17a16 16 0 0 1 16-16M5 17a12 12 0 0 1 12-12M9 17a8 8 0 0 1 8-8" fill="none" stroke="#ddd" strokeWidth="1.4" />
          </svg>
        </Tray>
      </Taskbar>
    </Page>
  );
}

function WrenchIcon() {
  return (
    <WrenchWrap>
      <svg width="15" height="18" viewBox="0 0 15 18">
        <path d="M2 1l11 15M13 1L2 16" stroke="#fff" strokeWidth="2.4" />
        <circle cx="3" cy="3" r="2.6" fill="#fff" />
        <rect x="10" y="13" width="4" height="4" fill="#fff" />
      </svg>
    </WrenchWrap>
  );
}

function NoteIcon() {
  return (
    <svg width="16" height="20" viewBox="0 0 16 20">
      <rect width="16" height="20" rx="2" fill="#2a7ad0" />
      <rect x="3" y="6" width="10" height="8" rx="1" fill="#fff" />
      <path d="M5 14V9h6v5" fill="none" stroke="#2a7ad0" strokeWidth="1.4" />
    </svg>
  );
}

function BoardIcon() {
  return (
    <svg width="17" height="20" viewBox="0 0 17 20">
      <rect x="0.5" y="0.5" width="16" height="19" fill="#222" stroke="#c03a4a" />
      <circle cx="5" cy="5" r="2.4" fill="#eee" />
      <circle cx="12" cy="4" r="2.4" fill="#eee" />
      <circle cx="5" cy="15" r="2.4" fill="#eee" />
      <circle cx="12" cy="15" r="2.4" fill="#eee" />
      <path d="M6 6l5 8" stroke="#c03a4a" />
    </svg>
  );
}

/* ---------- styled parts ---------- */

const Page = styled.div`
  position: relative;
  width: 1728px;
  height: 1080px;
  overflow: hidden;
  display: flex;
  flex-direction: column;
  background: #2d2d2d;
  font-family: ${UI};
  color: #ddd;
`;

const TopStrip = styled.div`
  height: 3px;
  background: #3a78c8;
`;

const StripThumb = styled.div`
  margin-left: 1082px;
  width: 195px;
  height: 3px;
  background: #d8d8d8;
`;

const TitleBar = styled.div`
  height: 30px;
  display: flex;
  align-items: center;
  background: #fff;
  color: #222;
  font-family: ${NARROW};
  font-size: 11.65px;
  white-space: pre;
`;

const TitleMin = styled.span`
  position: absolute;
  left: 1702px;
  top: 18px;
  width: 9px;
  height: 1px;
  background: #111;
`;

const TopWatermark = styled.div`
  position: absolute;
  left: 1014px;
  top: 0;
  font-size: 16.8px;
  line-height: 20px;
  font-weight: 700;
  color: #b594c4;
  white-space: nowrap;
`;

const MenuBar = styled.div`
  height: 22px;
  display: flex;
  align-items: center;
  gap: 18.5px;
  background: #000;
  overflow: hidden;
`;

const MenuItem = styled.span`
  font-size: 11.5px;
  color: #e4e4e4;
  &:first-child {
    margin-left: -7px;
  }
`;

const Toolbar = styled.div`
  height: 38px;
  display: flex;
  align-items: center;
  background: #2f2f2f;
  border-top: 4px solid #b02414;
  overflow: hidden;
  & > :first-child {
    margin-left: -12px;
  }
`;

const Tool = styled.div`
  flex: none;
  width: 30.6px;
  height: 32px;
  display: flex;
  align-items: center;
  justify-content: center;
  ${(p) => p.$active && `
    & > svg { background: #0d3f75; outline: 2px solid #1c6ab8; }
  `}
`;

const CaretSlot = styled.div`
  flex: none;
  width: ${(p) => p.$w}px;
  display: flex;
  justify-content: ${(p) => (p.$w > 8 ? "center" : "flex-start")};
`;

const SmallCaret = styled.span`
  width: 0;
  height: 0;
  border-left: 3px solid transparent;
  border-right: 3px solid transparent;
  border-top: 3px solid #888;
`;

const ToolSep = styled.div`
  flex: none;
  width: 1px;
  height: 26px;
  margin: 0 7px;
  border-left: 1px dashed #e8e8e8;
`;

const Workspace = styled.div`
  flex: 1;
  min-height: 0;
  display: flex;
`;

const MainColumn = styled.div`
  width: 1492px;
  display: flex;
  flex-direction: column;
`;

const BoardRow = styled.div`
  height: 775px;
  display: flex;
`;

const LeftPanel = styled.div`
  width: 139px;
  display: flex;
  flex-direction: column;
  background: #2d2d2d;
  border-right: 6px solid #4f4f4f;
  overflow: hidden;
`;

const PanelHead = styled.div`
  height: 27px;
  display: flex;
  align-items: center;
  padding-left: 10px;
  font-size: 13px;
  font-weight: 700;
  color: #eee;
  background: linear-gradient(#3d3d3d, #323232);
  border-bottom: 1px solid #484848;
`;

const LeftHead = styled(PanelHead)`
  justify-content: flex-end;
  padding: 0 12px 0 0;
`;

const WinIcons = styled.div`
  display: flex;
  align-items: center;
  gap: 12px;
`;

const MinBar = styled.span`
  width: 10px;
  height: 2px;
  margin-top: 8px;
  background: #ddd;
`;

const SubclassLabel = styled.div`
  margin: 6px 0 0 -7px;
  font-size: 12px;
  line-height: 16px;
`;

const Arrow = styled.span`
  width: 0;
  height: 0;
  border-left: 5.5px solid transparent;
  border-right: 5.5px solid transparent;
  border-top: 8px solid ${(p) => (p.$dim ? "#6b6b6b" : "#f4f4f4")};
`;

const ComboBox = styled.div`
  flex: none;
  width: ${(p) => p.$w}px;
  height: 22px;
  display: flex;
  align-items: center;
  justify-content: space-between;
  padding: 0 4px;
  font-size: 12px;
  color: #ddd;
  background: linear-gradient(#4a4a4a, #3a3a3a);
  border: 1px solid ${(p) => (p.$dim ? "#555" : "#888")};
`;

function Combo({ children, $w, $dim }) {
  return (
    <ComboBox $w={$w} $dim={$dim}>
      <span>{children}</span>
      <Arrow $dim={$dim} />
    </ComboBox>
  );
}

const LeftCombo = styled(ComboBox).attrs({ children: <><span /><Arrow /></> })`
  margin-top: ${(p) => p.$gap || 7}px;
  border-left: none;
`;

const Ghost = styled.div`
  margin-top: 496px;
  width: 30px;
  height: 40px;
  display: flex;
  align-items: center;
  justify-content: flex-end;
  padding: 0 9px 4px 0;
  background: #303030;
  font-family: "Liberation Serif", serif;
  font-size: 28px;
  color: #8e8e8e;
  white-space: nowrap;
`;

const LeftScroll = styled.div`
  margin-top: auto;
  margin-bottom: 3px;
  width: 116px;
  height: 7px;
  background: #8a8a8a;
`;

const BoardSvg = styled.svg`
  display: block;
  width: 1353px;
  height: 775px;
  background: #000;
  font-family: "Liberation Sans", sans-serif;
`;

const CommandPanel = styled.div`
  flex: 1;
  display: flex;
  flex-direction: column;
  background: #303030;
`;

const CommandHead = styled.div`
  height: 33px;
  display: flex;
  justify-content: flex-end;
  align-items: center;
  padding-right: 11px;
  background: linear-gradient(#333, #454545 45%, #3a3a3a);
  border-bottom: 1px solid #4a4a4a;
`;

const CommandBox = styled.div`
  position: relative;
  margin: 9px 10px 0 -2px;
  height: 76px;
  padding: 2px 0 0 2px;
  background: #474747;
  border: 1px solid #8a8a8a;
`;

const CommandLine = styled.div`
  height: 12.8px;
  font-size: 11px;
  line-height: 13px;
  color: #e8e8e8;
`;

const CommandThumb = styled.span`
  position: absolute;
  right: 4px;
  bottom: 3px;
  width: 8px;
  height: 20px;
  background: #888;
`;

const CommandInput = styled.div`
  margin: 6px 10px 0 -2px;
  height: 22px;
  display: flex;
  align-items: center;
  justify-content: flex-end;
  padding-right: 5px;
  background: #464646;
  border: 1px solid #8a8a8a;
`;

const RightPanel = styled.div`
  flex: 1;
  display: flex;
  flex-direction: column;
  overflow: hidden;
  background: #3a3a3a;
  border-left: 6px solid #484848;
`;

const RightCard = styled.div`
  height: 320px;
  background: #2d2d2d;
  overflow: hidden;
`;

const FindCard = styled.div`
  flex: 1;
  margin-top: 7px;
  background: #2d2d2d;
`;

const GlobalRow = styled.div`
  display: flex;
  margin-top: 19px;
  height: 22px;
`;

const ViewRow = styled.div`
  display: flex;
  margin-top: 6px;
  height: 22px;
`;

const RowLabel = styled.div`
  flex: none;
  width: 92px;
  padding-left: 9px;
  font-size: 11.5px;
  line-height: 24px;
  color: #d8d8d8;
  white-space: nowrap;
`;

const PlainButton = styled.button`
  flex: none;
  width: ${(p) => p.$w}px;
  height: 22px;
  margin-left: ${(p) => p.$left || 0}px;
  padding: 0;
  font-family: ${UI};
  font-size: 12px;
  color: #e0e0e0;
  background: linear-gradient(#4e4e4e, #404040);
  border: 1px solid #7a7a7a;
`;

const ViewField = styled.div`
  flex: none;
  width: 140px;
  height: 22px;
  background: #3f3f3f;
  border: 1px solid #7a7a7a;
`;

const layerGrid = `
  display: grid;
  grid-template-columns: 89px 26px 25px 24px 21px 22px 24px;
  align-items: center;
  width: 231px;
  margin-left: 7px;
`;

const LayerHeadRow = styled.div`
  ${layerGrid}
  margin-top: 19px;
  height: 15px;
`;

const LayerHeadName = styled.span`
  padding-left: 3px;
  font-size: 11px;
  text-decoration: underline;
`;

const LayerHead = styled.span`
  text-align: center;
  font-size: 11px;
  text-decoration: underline;
`;

const LayerRow = styled.div`
  ${layerGrid}
  height: ${(p) => (p.$tall ? 22 : 21)}px;
  background: ${(p) => (p.$shade ? "#3f3f3f" : "transparent")};
`;

const LayerList = styled.div`
  margin-top: 4px;
  height: 106px;
  overflow: hidden;
`;

const LayerName = styled.span`
  padding-left: 3px;
  font-size: 11.5px;
  color: #d8d8d8;
`;

const ConductorName = styled(LayerName)`
  display: flex;
  align-items: center;
  gap: 7px;
  padding-left: 4px;
  white-space: nowrap;
`;

const Cell = styled.span`
  display: flex;
  justify-content: center;
`;

const WhiteBox = styled.span`
  width: 15px;
  height: 15px;
  background: ${(p) => (p.$dim ? "#e8e8e8" : "#fff")};
  outline: 1px solid #111;
`;

const BigCheck = styled(WhiteBox)`
  flex: none;
`;

const Swatch = styled.span`
  width: 15px;
  height: 15px;
  background: ${(p) => p.$c};
  border: 1px solid #000;
  outline: 1px solid ${(p) => (p.$c === "#000" ? "#222" : "#000")};
`;

const Rule = styled.div`
  margin: ${(p) => p.$top}px 0 ${(p) => p.$bottom}px 7px;
  height: 1px;
  background: #e8e8e8;
`;

const SmallBox = styled.span`
  flex: none;
  width: ${(p) => (p.$off ? 13 : 11)}px;
  height: ${(p) => (p.$off ? 13 : 11)}px;
  margin-left: ${(p) => (p.$off ? -1 : 0)}px;
  margin-right: ${(p) => (p.$off ? -1 : 0)}px;
  background: #f6f6f6;
  border: ${(p) => (p.$off ? "1px solid #888" : "none")};
`;

const EnableRow = styled.div`
  display: flex;
  align-items: center;
  gap: 7px;
  height: 14px;
  margin: 4px 0 0 89px;
  font-size: 11px;
  white-space: nowrap;
`;

const FilterSet = styled.fieldset`
  margin: 0 -4px 0 7px;
  padding: 0;
  height: 296px;
  border: 1px solid #666;
  border-right: none;
`;

const Legend = styled.legend`
  margin-left: 3px;
  padding: 0 5px;
  font-size: 11.5px;
  line-height: 15px;
  color: #d8d8d8;
`;

const ButtonRow = styled.div`
  display: flex;
  gap: 5px;
  margin: 10px 0 0 4px;
`;

const FilterGrid = styled.div`
  display: grid;
  grid-template-columns: 97px 100px;
  margin: 1px 0 0 6px;
`;

const FilterItem = styled.div`
  display: flex;
  align-items: center;
  gap: 7px;
  height: 18px;
  font-size: 11.5px;
  color: ${(p) => (p.$off ? "#707070" : "#d8d8d8")};
  white-space: nowrap;
`;

const SavedBox = styled.div`
  margin-top: 6px;
  padding: 12px 0 0 5px;
  height: 60px;
  border-top: 1px solid #666;
  border-left: 1px solid #666;
`;

const SavedRow = styled.div`
  display: flex;
  align-items: center;
  gap: 7px;
  height: 16px;
  margin: 0 0 2px 2px;
  font-size: 11.5px;
  color: #d8d8d8;
`;

const QueryButton = styled(PlainButton)`
  display: block;
  width: 108px;
  margin: 7px 0 0 12px;
  font-size: 11.5px;
`;

const NameSet = styled(FilterSet)`
  height: 80px;
  margin-top: 14px;
  padding: 0;
`;

const NameRow = styled.div`
  display: flex;
  align-items: center;
  gap: 7px;
  margin: ${(p) => p.$top}px 0 0 4px;
`;

const Prompt = styled.span`
  width: 9px;
  margin-right: -1px;
  padding-left: 3px;
  font-size: 9px;
`;

const NameInput = styled.div`
  width: 113px;
  height: 22px;
  background: #3a3a3a;
  border: 1px solid #777;
`;

const StatusBar = styled.div`
  height: 26px;
  display: flex;
  align-items: center;
  background: #303030;
  border-top: 1px solid #444;
  font-family: ${NARROW};
`;

const StatusText = styled.span`
  margin-left: ${(p) => p.$left}px;
  font-size: 12px;
  color: #e0e0e0;
  white-space: nowrap;
`;

const StatusButton = styled.span`
  flex: none;
  margin-left: ${(p) => p.$left}px;
  width: ${(p) => p.$w}px;
  height: 21px;
  display: flex;
  align-items: center;
  justify-content: center;
  font-size: 12px;
  color: #e0e0e0;
  background: #454545;
  border: 1px solid #7a7a7a;
`;

const StatusGap = styled.span`
  flex: 1;
`;

const WrenchWrap = styled.span`
  display: flex;
  margin-left: 16px;
`;

const DrcBlock = styled.div`
  flex: none;
  margin-left: 12px;
  width: 29px;
  height: 21px;
  display: flex;
  align-items: center;
  gap: 5px;
  padding-left: 5px;
  overflow: hidden;
  background: #18d018;
`;

const DrcText = styled.span`
  font-size: 12px;
  color: #111;
`;

const BottomWatermark = styled.div`
  position: absolute;
  left: 980px;
  top: 1009px;
  font-size: 19.5px;
  line-height: 28px;
  font-weight: 700;
  color: #b030b4;
  white-space: nowrap;
`;

const Taskbar = styled.div`
  height: 30px;
  display: flex;
  background: #101010;
`;

const TaskItem = styled.div`
  flex: none;
  width: ${(p) => p.$w}px;
  margin-left: ${(p) => p.$left || 0}px;
  display: flex;
  align-items: center;
  gap: 4px;
  padding-left: ${(p) => (p.$active || p.$orange ? 8 : 5)}px;
  padding-bottom: 3px;
  overflow: hidden;
  font-family: ${NARROW};
  font-size: 11.6px;
  color: #f0f0f0;
  white-space: nowrap;
  background: ${(p) => (p.$orange ? "#9e5a1d" : p.$active ? "#2c2c2c" : "transparent")};
  border-bottom: 2px solid ${(p) => (p.$orange ? "#f47a10" : "#78aede")};
  & > svg {
    flex: none;
  }
  &:first-child {
    padding-left: 0;
  }
`;

const Tray = styled.div`
  margin-left: auto;
  margin-right: -1px;
  display: flex;
  align-items: center;
  gap: 6px;
  padding-bottom: 2px;
`;

const TrayCount = styled.span`
  font-size: 15px;
  color: #f4f4f4;
`;

const BluetoothBadge = styled.span`
  display: flex;
  align-items: center;
  justify-content: center;
  width: 14px;
  height: 22px;
  border-radius: 7px;
  background: #1a6ad0;
`;
